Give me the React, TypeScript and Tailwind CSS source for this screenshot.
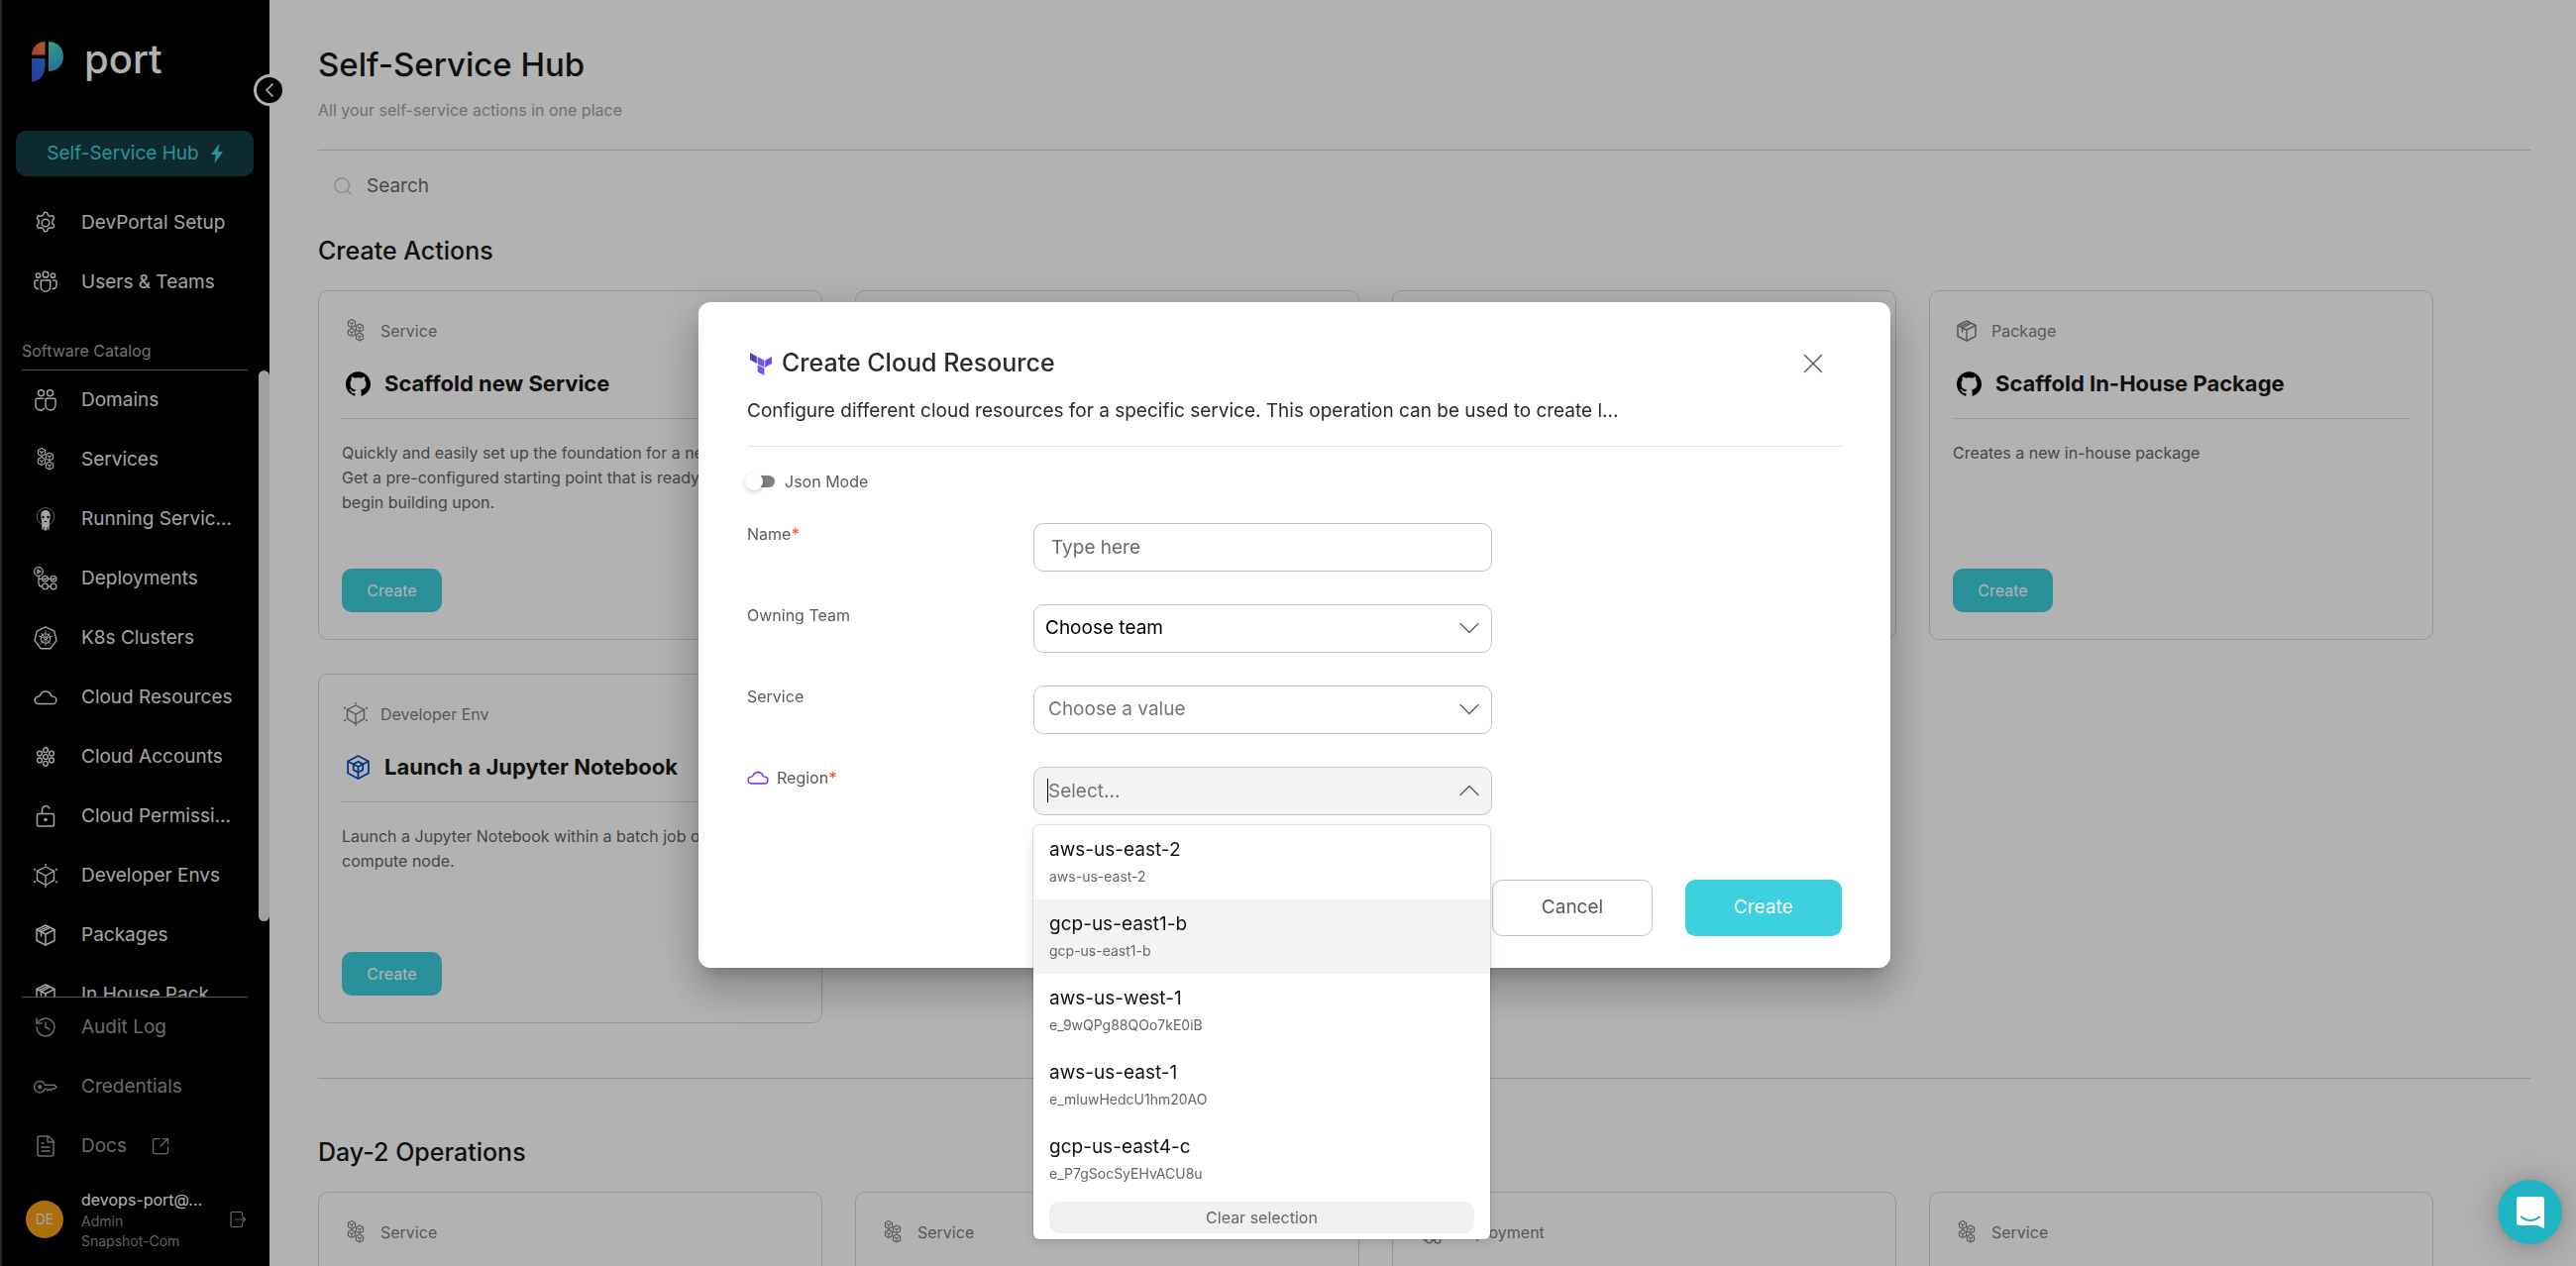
import React, { useState } from "react";
import { ChevronLeft, FileText, History, Search, SquareArrowOutUpRight, X } from "lucide-react";
import { SiGithub } from "react-icons/si";

type IconProps = { className?: string };

const strokeProps = {
  fill: "none",
  stroke: "currentColor",
  strokeLinecap: "round" as const,
  strokeLinejoin: "round" as const,
};

const PortMark = ({ className }: IconProps) => (
  <svg viewBox="0 0 32 41" className={className} aria-hidden="true">
    <defs>
      <linearGradient id="markRed" x1="1" y1="0" x2="0" y2="1">
        <stop offset="0" stopColor="#f58a1f" />
        <stop offset="1" stopColor="#ef5a6a" />
      </linearGradient>
      <linearGradient id="markTeal" x1="0" y1="0" x2="0.3" y2="1">
        <stop offset="0" stopColor="#4fe0c4" />
        <stop offset="1" stopColor="#2fa8dc" />
      </linearGradient>
      <linearGradient id="markBlue" x1="1" y1="0" x2="0" y2="1">
        <stop offset="0" stopColor="#2a7fe0" />
        <stop offset="1" stopColor="#4050e0" />
      </linearGradient>
    </defs>
    <path d="M13.500 0v13.500H0C0 6 6 0 13.500 0Z" fill="url(#markRed)" />
    <path d="M0 17h13.500v6.500C13.500 33 8 40.500 0 40.500Z" fill="url(#markBlue)" />
    <path d="M17 0c9 0 15 6.500 15 15s-6 15-15 15Z" fill="url(#markTeal)" />
  </svg>
);

const BoltIcon = ({ className }: IconProps) => (
  <svg viewBox="0 0 12 20" className={className} fill="currentColor" aria-hidden="true">
    <path d="M8.500 0 0 11h4.600L3.500 20 12 8.200H7.200Z" />
  </svg>
);

const GearIcon = ({ className }: IconProps) => (
  <svg viewBox="0 0 24 24" className={className} {...strokeProps} strokeWidth="1.500" aria-hidden="true">
    <circle cx="12" cy="12" r="3.800" />
    <path d="M9.600 4.200 10.300 2.200a1.500 1.500 0 0 1 1.400-1h.6a1.500 1.500 0 0 1 1.400 1l.7 2 1.900 1.100 2.100-.4a1.500 1.500 0 0 1 1.600.7l.4.700a1.500 1.500 0 0 1-.2 1.700l-1.400 1.700v2.600l1.400 1.700a1.500 1.500 0 0 1 .2 1.700l-.4.700a1.500 1.500 0 0 1-1.600.7l-2.100-.4-1.900 1.100-.7 2a1.500 1.500 0 0 1-1.400 1h-.6a1.500 1.500 0 0 1-1.400-1l-.7-2-1.900-1.100-2.100.4a1.500 1.500 0 0 1-1.600-.7l-.4-.7a1.500 1.500 0 0 1 .2-1.700l1.400-1.700v-2.600L3.800 8a1.500 1.500 0 0 1-.2-1.700l.4-.7a1.500 1.500 0 0 1 1.600-.7l2.100.4Z" />
  </svg>
);

const UsersIcon = ({ className }: IconProps) => (
  <svg viewBox="0 0 24 24" className={className} {...strokeProps} strokeWidth="1.500" aria-hidden="true">
    <circle cx="12" cy="4.200" r="2.900" />
    <circle cx="4.500" cy="5.200" r="2.100" />
    <circle cx="19.500" cy="5.200" r="2.100" />
    <path d="M7.300 10h9.400v6.500a4.700 4.700 0 0 1-9.400 0Z" />
    <path d="M4.500 10H2.200a1.200 1.200 0 0 0-1.200 1.200V15a3.500 3.500 0 0 0 3.800 3.600M19.500 10h2.300a1.200 1.200 0 0 1 1.200 1.200V15a3.500 3.500 0 0 1-3.800 3.600" />
  </svg>
);

const DomainsIcon = ({ className }: IconProps) => (
  <svg viewBox="0 0 24 24" className={className} {...strokeProps} strokeWidth="1.500" aria-hidden="true">
    <circle cx="7.500" cy="4.800" r="3" />
    <circle cx="16.500" cy="4.800" r="3" />
    <path d="M12 11.200a1 1 0 0 1 1-1h8a1 1 0 0 1 1 1V17a5 5 0 0 1-10 0Z" />
    <path d="M9.800 10.200H3.300a1.300 1.300 0 0 0-1.300 1.300V17a5 5 0 0 0 8.800 3.300" />
  </svg>
);

const hexagons = [
  [8, 4.5],
  [16, 9],
  [8, 13.5],
  [16, 18],
];

const ServicesIcon = ({ className }: IconProps) => (
  <svg viewBox="0 0 24 24" className={className} {...strokeProps} strokeWidth="1.100" aria-hidden="true">
    {hexagons.map(([x, y]) => (
      <g key={`${x}-${y}`} transform={`translate(${x} ${y})`}>
        <path d="M0-4 3.600-2v4L0 4-3.600 2v-4Z" />
        <path d="M-2-.9 0 .2 2-.9M0 .2v2.200" />
      </g>
    ))}
  </svg>
);

const ArgoIcon = ({ className }: IconProps) => (
  <svg viewBox="0 0 24 24" className={className} aria-hidden="true">
    <circle cx="12" cy="9.500" r="8.900" fill="none" stroke="currentColor" strokeWidth="1" opacity="0.6" />
    <path
      d="M12 3c2.900 0 4.800 2.300 4.800 5.600 0 2.500-.9 4.200-1 6v7.900h-1.500V20h-.8v3.500h-3V20h-.8v2.500H8.200v-7.900c-.1-1.800-1-3.500-1-6C7.200 5.300 9.100 3 12 3Z"
      fill="currentColor"
    />
    <circle cx="9.500" cy="10" r="1.200" fill="#000" />
    <circle cx="14.500" cy="10" r="1.200" fill="#000" />
    <path d="M10.800 14h2.400a1.200 1.200 0 0 1-2.400 0Z" fill="#000" />
  </svg>
);

const DeploymentsIcon = ({ className }: IconProps) => (
  <svg viewBox="0 0 24 24" className={className} {...strokeProps} strokeWidth="1.300" aria-hidden="true">
    <circle cx="5" cy="5" r="4.300" />
    <path d="M3.900 3.200v3.600L7 5Z" />
    <path d="M5 9.300V17a3 3 0 0 0 3 3M5 12.300h3.500" />
    <circle cx="11.500" cy="12.300" r="2.900" />
    <circle cx="20" cy="12.300" r="2.900" />
    <circle cx="11.500" cy="20" r="2.900" />
    <circle cx="20" cy="20" r="2.900" />
    <path d="m10.300 12.300 1 1 1.600-1.600M18.800 12.300l1 1 1.600-1.600M14.400 12.300h2.700M14.400 20h2.700" />
  </svg>
);

const KubernetesIcon = ({ className }: IconProps) => (
  <svg viewBox="0 0 24 24" className={className} {...strokeProps} strokeWidth="1.400" aria-hidden="true">
    <path d="M12 .9 20.800 5.100 23 14.700 16.900 22.700H7.100L1 14.700 3.200 5.100Z" />
    <circle cx="12" cy="12.500" r="4.800" strokeWidth="1.100" />
    <circle cx="12" cy="12.500" r="1.300" strokeWidth="1" />
    <path
      d="M12 5v6M12 19.500V14M5 10l5.700 2M19 10l-5.700 2M7 18l4-4.500M17 18l-4-4.500M7.500 7l3.500 4.500M16.500 7 13 11.500"
      strokeWidth="0.900"
    />
  </svg>
);

const CloudIcon = ({ className }: IconProps) => (
  <svg viewBox="0 0 24 24" className={className} {...strokeProps} strokeWidth="1.500" aria-hidden="true">
    <path d="M5 18.500a3.700 3.700 0 0 1-.3-7.400c.9-.1 1.600-.5 2-1.500a5.700 5.700 0 0 1 10.600 0c.4 1 1.100 1.400 2 1.500a3.700 3.700 0 0 1-.3 7.400Z" />
  </svg>
);

const AccountsIcon = ({ className }: IconProps) => (
  <svg viewBox="0 0 24 24" className={className} {...strokeProps} strokeWidth="1.400" aria-hidden="true">
    <circle cx="12" cy="12" r="2.400" />
    <circle cx="12" cy="5.200" r="2.400" />
    <circle cx="12" cy="18.800" r="2.400" />
    <circle cx="6" cy="8.600" r="2.400" />
    <circle cx="18" cy="8.600" r="2.400" />
    <circle cx="6" cy="15.400" r="2.400" />
    <circle cx="18" cy="15.400" r="2.400" />
  </svg>
);

const UnlockIcon = ({ className }: IconProps) => (
  <svg viewBox="0 0 24 24" className={className} {...strokeProps} strokeWidth="1.500" aria-hidden="true">
    <rect x="3.500" y="9.500" width="17" height="12.500" rx="1.500" />
    <path d="M8.500 9.500V5.300a3.800 3.800 0 0 1 7.300-1.400" />
    <circle cx="12" cy="15.500" r="1" fill="currentColor" />
  </svg>
);

const EnvIcon = ({ className }: IconProps) => (
  <svg viewBox="0 0 24 24" className={className} {...strokeProps} strokeWidth="1.400" aria-hidden="true">
    <path d="M12 3 20.500 7.300v9.400L12 21.500 3.500 16.700V7.300Z" />
    <path d="m3.500 7.300 8.500 4.700 8.500-4.700M12 12v9.500" />
    <path d="M12 0v1.200M12 22.800V24M.5 5.500l1 .5M23.500 5.500l-1 .5M.5 18.500l1-.5M23.500 18.500l-1-.5" />
  </svg>
);

const PackageIcon = ({ className }: IconProps) => (
  <svg viewBox="0 0 24 24" className={className} {...strokeProps} strokeWidth="1.500" aria-hidden="true">
    <path d="M12 2 21 6.500v11L12 22l-9-4.500v-11Z" />
    <path d="m3 6.500 9 4.500 9-4.500M12 11v11M7.500 13V8.800l9-4.500M7.500 8.800 5.500 7.700l9-4.400" />
  </svg>
);

const KeyIcon = ({ className }: IconProps) => (
  <svg viewBox="0 0 26 24" className={className} {...strokeProps} strokeWidth="1.600" aria-hidden="true">
    <path d="M12.300 10A6.100 6.100 0 1 0 12.300 14.500H14l1.500 1.500 1.500-1.500 1.500 1.500 1.500-1.500h2.500l2.500-2.300L22.500 10Z" />
    <circle cx="6.800" cy="12.200" r="1.500" fill="currentColor" />
  </svg>
);

const LogoutIcon = ({ className }: IconProps) => (
  <svg viewBox="0 0 16 16" className={className} {...strokeProps} strokeWidth="1.200" aria-hidden="true">
    <path d="M12.500 4V2a1.500 1.500 0 0 0-1.500-1.500H2.500A1.500 1.500 0 0 0 1 2v12a1.500 1.500 0 0 0 1.500 1.500H11a1.500 1.500 0 0 0 1.500-1.500v-2" />
    <path d="M5.500 8h10M13 5.500 15.500 8 13 10.500" />
  </svg>
);

const NotebookIcon = ({ className }: IconProps) => (
  <svg viewBox="0 0 24 24" className={className} {...strokeProps} strokeWidth="1.700" aria-hidden="true">
    <path d="M12 1 22 6.300v11.400L12 23 2 17.700V6.300Z" />
    <path d="m2 6.300 10 5.200 10-5.200M12 11.500V23" />
    <path d="M12 6.500 16.500 9v5.500L12 17l-4.500-2.500V9Z" />
  </svg>
);

const TerraformIcon = ({ className }: IconProps) => (
  <svg viewBox="0 0 24 24" className={className} aria-hidden="true">
    <path d="M1 1v7.200l6.800 3.700V4.700Z" fill="#4a48b8" />
    <path d="M8.600 5.100v7.200l6.800 3.700V8.800Z" fill="#7b52ee" />
    <path d="M16.200 8.800V16l6.800-3.900V4.900Z" fill="#6f50ea" />
    <path d="M8.600 13.200v7.100l6.800 3.700v-7.200Z" fill="#7b52ee" />
  </svg>
);

const Chevron = ({ className }: IconProps) => (
  <svg viewBox="0 0 20 12" className={className} {...strokeProps} strokeWidth="1.200" aria-hidden="true">
    <path d="m1 1.500 9 9 9-9" />
  </svg>
);

const catalog = [
  { label: "Domains", icon: DomainsIcon },
  { label: "Services", icon: ServicesIcon },
  { label: "Running Servic...", icon: ArgoIcon },
  { label: "Deployments", icon: DeploymentsIcon },
  { label: "K8s Clusters", icon: KubernetesIcon },
  { label: "Cloud Resources", icon: CloudIcon },
  { label: "Cloud Accounts", icon: AccountsIcon },
  { label: "Cloud Permissi...", icon: UnlockIcon },
  { label: "Developer Envs", icon: EnvIcon },
  { label: "Packages", icon: PackageIcon },
  { label: "In House Pack...", icon: PackageIcon },
];

const NavItem = ({ label, icon: Icon, children }: { label: string; icon: React.ElementType; children?: React.ReactNode }) => (
  <a href="#" className="flex h-[60px] shrink-0 items-center pl-8 text-[19px] whitespace-nowrap">
    <Icon className="mr-6 size-6 shrink-0" strokeWidth={1.5} />
    {label}
    {children}
  </a>
);

const Sidebar = () => (
  <aside className="relative flex w-[272px] shrink-0 flex-col border-l-2 border-[#3a3a3a] bg-black text-[#ebebeb]">
    <div className="flex h-[132px] items-start pt-10 pl-[30px]">
      <PortMark className="mt-[2px] h-[41px] w-8" />
      <span className="ml-[21px] text-[40px] leading-[40px] font-medium text-white">port</span>
    </div>
    <button
      type="button"
      aria-label="Collapse menu"
      className="absolute top-[75px] -right-4 flex size-8 items-center justify-center rounded-full border-[3px] border-white bg-black text-white"
    >
      <ChevronLeft className="size-6" strokeWidth={1.75} />
    </button>
    <a
      href="#"
      className="mr-4 mb-[17px] ml-[14px] flex h-[46px] shrink-0 items-center justify-center gap-3 rounded-[10px] bg-[#133d42] text-[19px] text-[#3cd0dd]"
    >
      Self-Service Hub
      <BoltIcon className="h-5 w-3" />
    </a>
    <nav className="flex min-h-0 flex-1 flex-col">
      <NavItem label="DevPortal Setup" icon={GearIcon} />
      <NavItem label="Users & Teams" icon={UsersIcon} />
      <h2 className="mr-[22px] ml-5 flex h-[59px] shrink-0 items-end border-b border-[#777] pb-[7px] text-base leading-6 text-[#a4a4a4]">
        Software Catalog
      </h2>
      <div className="relative min-h-0 flex-1 overflow-hidden">
        {catalog.map((item) => (
          <NavItem key={item.label} {...item} />
        ))}
        <div className="absolute top-0 right-0 h-[88%] w-[11px] rounded-full bg-[#e6e6e6]" />
      </div>
      <div className="mr-[22px] ml-5 border-b border-[#777]" />
      <div className="text-[#9a9a9a]">
        <NavItem label="Audit Log" icon={History} />
        <NavItem label="Credentials" icon={KeyIcon} />
        <NavItem label="Docs" icon={FileText}>
          <SquareArrowOutUpRight className="ml-6 size-5" strokeWidth={1.5} />
        </NavItem>
      </div>
    </nav>
    <div className="flex h-[91px] shrink-0 items-center px-6 pb-1">
      <span className="flex size-[38px] items-center justify-center rounded-full bg-[#f6a016] text-sm text-[#e8e8e8]">DE</span>
      <div className="ml-[18px] flex-1 text-[14px] leading-5 text-[#8f8f8f]">
        <p className="text-base leading-6 text-white">devops-port@...</p>
        <p>Admin</p>
        <p>Snapshot-Com</p>
      </div>
      <button type="button" aria-label="Log out" className="text-[#9a9a9a]">
        <LogoutIcon className="size-4" />
      </button>
    </div>
  </aside>
);

type Action = {
  kind?: string;
  kindIcon?: React.ElementType;
  title?: string;
  icon?: React.ElementType;
  iconClass?: string;
  text?: string;
};

const createActions: Action[] = [
  {
    kind: "Service",
    kindIcon: ServicesIcon,
    title: "Scaffold new Service",
    icon: SiGithub,
    text: "Quickly and easily set up the foundation for a new service. Get a pre-configured starting point that is ready for you to begin building upon.",
  },
  {},
  {},
  {
    kind: "Package",
    kindIcon: PackageIcon,
    title: "Scaffold In-House Package",
    icon: SiGithub,
    text: "Creates a new in-house package",
  },
  {
    kind: "Developer Env",
    kindIcon: EnvIcon,
    title: "Launch a Jupyter Notebook",
    icon: NotebookIcon,
    iconClass: "text-[#0b4bbd]",
    text: "Launch a Jupyter Notebook within a batch job on a new compute node.",
  },
];

const dayTwoActions: Action[] = [
  { kind: "Service", kindIcon: ServicesIcon },
  { kind: "Service", kindIcon: ServicesIcon },
  { kind: "Deployment", kindIcon: DeploymentsIcon },
  { kind: "Service", kindIcon: ServicesIcon },
];

const ActionCard = ({ kind, kindIcon: KindIcon, title, icon: Icon, iconClass = "text-black", text }: Action) => (
  <article className="flex h-[353px] w-[509px] flex-col rounded-[10px] border border-[#d6d6dc] px-[23px] pt-[26px] pb-[27px]">
    <div className="flex h-7 items-center gap-[11px] text-base text-[#7f7f7f]">
      {KindIcon && <KindIcon className="mx-[2px] size-6" />}
      {kind}
    </div>
    {title && Icon && (
      <>
        <h3 className="mt-6 flex h-[30px] items-center gap-[11px] text-[22px] font-bold text-[#181818]">
          <span className="flex w-8 justify-center">
            <Icon className={`size-[25px] ${iconClass}`} />
          </span>
          {title}
        </h3>
        <p className="mt-5 border-t border-[#d6d6dc] pt-[22px] text-base leading-[25px] text-[#666]">{text}</p>
        <button type="button" className="mt-auto h-11 w-[101px] rounded-[10px] bg-[#3dd0de] text-base text-white">
          Create
        </button>
      </>
    )}
  </article>
);

const Hub = () => (
  <main className="min-w-0 flex-1 overflow-hidden bg-white pr-[46px] pl-[49px]">
    <header className="border-b border-[#d2d2d8] pt-11 pb-7">
      <h1 className="text-[33px] leading-[42px] font-medium text-[#181818]">Self-Service Hub</h1>
      <p className="mt-[13px] text-base leading-6 text-[#a3a3a3]">All your self-service actions in one place</p>
    </header>
    <label className="mt-[17px] flex h-[38px] items-center gap-[13px] pl-[14px]">
      <Search className="size-[22px] text-[#c8c8c8]" strokeWidth={1.5} />
      <input
        type="text"
        aria-label="Search"
        placeholder="Search"
        className="w-80 text-[19px] outline-none placeholder:text-[#6c6c6c]"
      />
    </label>
    <section className="mt-[30px] border-b border-[#d2d2d8] pb-[55px]">
      <h2 className="text-[25px] leading-8 font-medium text-[#181818]">Create Actions</h2>
      <div className="mt-6 flex flex-wrap gap-x-[33px] gap-y-[34px]">
        {createActions.map((action, i) => (
          <ActionCard key={i} {...action} />
        ))}
      </div>
    </section>
    <section className="mt-[58px]">
      <h2 className="text-[25px] leading-8 font-medium text-[#181818]">Day-2 Operations</h2>
      <div className="mt-6 flex flex-wrap gap-x-[33px] gap-y-[34px]">
        {dayTwoActions.map((action, i) => (
          <ActionCard key={i} {...action} />
        ))}
      </div>
    </section>
  </main>
);

const regions = [
  { title: "aws-us-east-2", id: "aws-us-east-2" },
  { title: "gcp-us-east1-b", id: "gcp-us-east1-b" },
  { title: "aws-us-west-1", id: "e_9wQPg88QOo7kE0iB" },
  { title: "aws-us-east-1", id: "e_mluwHedcU1hm20AO" },
  { title: "gcp-us-east4-c", id: "e_P7gSocSyEHvACU8u" },
];

const Field = ({
  label,
  htmlFor,
  required,
  icon,
  children,
}: {
  label: string;
  htmlFor: string;
  required?: boolean;
  icon?: React.ReactNode;
  children: React.ReactNode;
}) => (
  <div className="flex items-start">
    <label htmlFor={htmlFor} className="flex w-[289px] shrink-0 items-center text-base leading-[22px] text-[#5a5a5a]">
      {icon}
      {label}
      {required && <span className="font-semibold text-[#ff5c35]">*</span>}
    </label>
    <div className="relative w-[463px]">{children}</div>
  </div>
);

const RegionSelect = () => {
  const [value, setValue] = useState("");
  const [active, setActive] = useState(1);

  return (
    <>
      <input
        id="region"
        type="text"
        role="combobox"
        aria-expanded="true"
        aria-controls="region-list"
        placeholder="Select..."
        value={value}
        onChange={(e) => setValue(e.target.value)}
        className="h-[49px] w-full rounded-[10px] border border-[#c4c4c4] bg-[#f3f3f3] px-[14px] text-[19px] outline-none placeholder:text-[#757575]"
      />
      <span className="absolute top-3 left-[14px] h-6 w-px bg-black" />
      <Chevron className="absolute top-[18px] right-[13px] h-3 w-5 rotate-180 text-[#555]" />
      <div className="absolute top-[59px] right-[2px] left-0 z-10 overflow-hidden rounded-md bg-white pb-[6px] shadow-[0_0_0_1px_rgba(0,0,0,0.1),0_4px_11px_rgba(0,0,0,0.12)]">
        <ul id="region-list" role="listbox">
          {regions.map((region, i) => (
            <li
              key={region.id}
              role="option"
              aria-selected={i === active}
              onMouseEnter={() => setActive(i)}
              onClick={() => setValue(region.title)}
              className={i === active ? "h-[75px] bg-[#f3f3f3] px-4 pt-3" : "h-[75px] px-4 pt-3"}
            >
              <p className="text-[19px] leading-[26px] text-[#111]">{region.title}</p>
              <p className="mt-1 text-[14px] leading-5 text-[#666]">{region.id}</p>
            </li>
          ))}
        </ul>
        <div className="px-4 pt-[5px]">
          <button
            type="button"
            onClick={() => setValue("")}
            className="h-8 w-full rounded-[10px] bg-[#eff0f2] text-base text-[#666]"
          >
            Clear selection
          </button>
        </div>
      </div>
    </>
  );
};

const selectClass =
  "h-[49px] w-full appearance-none rounded-[10px] border border-[#c4c4c4] bg-white text-[19px] outline-none";

const CreateDialog = () => (
  <div className="fixed inset-0 flex items-center justify-center bg-black/30 pt-1 pl-[13px]">
    <div
      role="dialog"
      aria-labelledby="dialog-title"
      className="w-full max-w-[1203px] rounded-xl bg-white px-[49px] pt-11 pb-8 shadow-[0_11px_15px_-7px_rgba(0,0,0,0.2),0_24px_38px_3px_rgba(0,0,0,0.14),0_9px_46px_8px_rgba(0,0,0,0.12)]"
    >
      <div className="flex h-9 items-center pr-3 pl-[2px]">
        <TerraformIcon className="size-6" />
        <h2 id="dialog-title" className="ml-[9px] flex-1 text-[25px] font-medium text-[#2c2c2c]">
          Create Cloud Resource
        </h2>
        <button type="button" aria-label="Close" className="text-[#5f5f5f]">
          <X className="size-[34px]" strokeWidth={1.1} />
        </button>
      </div>
      <p className="mt-4 border-b border-[#dfe0ea] pb-[21px] text-[19px] leading-7 text-[#2a2a2a]">
        Configure different cloud resources for a specific service. This operation can be used to create l...
      </p>
      <form className="mt-[23px]" onSubmit={(e) => e.preventDefault()}>
        <label className="flex items-center gap-[10px] text-base leading-6 text-[#5a5a5a]">
          <span className="relative flex h-3 w-7 items-center rounded-full bg-[#808080]">
            <input
              type="checkbox"
              role="switch"
              className="absolute -left-[2px] size-[18px] appearance-none rounded-full bg-white shadow-[0_2px_5px_rgba(0,0,0,0.2)]"
            />
          </span>
          Json Mode
        </label>
        <div className="mt-[30px] flex flex-col gap-[33px]">
          <Field label="Name" htmlFor="name" required>
            <input
              id="name"
              type="text"
              placeholder="Type here"
              className="h-[49px] w-full rounded-[10px] border border-[#c4c4c4] bg-white px-[17px] text-[19px] outline-none placeholder:text-[#6c6c6c]"
            />
          </Field>
          <Field label="Owning Team" htmlFor="team">
            <select id="team" className={`${selectClass} pl-[11px] text-black`}>
              <option>Choose team</option>
            </select>
            <Chevron className="pointer-events-none absolute top-[18px] right-[13px] h-3 w-5 text-[#555]" />
          </Field>
          <Field label="Service" htmlFor="service">
            <select id="service" className={`${selectClass} pl-[14px] text-[#757575]`}>
              <option>Choose a value</option>
            </select>
            <Chevron className="pointer-events-none absolute top-[18px] right-[13px] h-3 w-5 text-[#555]" />
          </Field>
          <Field
            label="Region"
            htmlFor="region"
            required
            icon={<CloudIcon className="mr-2 size-[22px] text-[#7a22f5]" />}
          >
            <RegionSelect />
          </Field>
        </div>
        <div className="mt-[65px] flex justify-end gap-[33px]">
          <button type="button" className="h-[57px] w-[162px] rounded-[10px] border border-[#c4c4c4] text-[19px] text-[#5a5a5a]">
            Cancel
          </button>
          <button type="submit" className="h-[57px] w-[158px] rounded-[10px] bg-[#3dd0de] text-[19px] text-white">
            Create
          </button>
        </div>
      </form>
    </div>
  </div>
);

const ChatButton = () => (
  <button
    type="button"
    aria-label="Open chat"
    className="fixed right-[14px] bottom-[22px] flex size-[65px] items-center justify-center rounded-full bg-[#20b3c2] shadow-[0_1px_8px_rgba(0,0,0,0.1),0_3px_36px_rgba(0,0,0,0.25)]"
  >
    <svg viewBox="0 0 28 32" className="h-8 w-7" aria-hidden="true">
      <path d="M3 0h22a3 3 0 0 1 3 3v29l-7-3H3a3 3 0 0 1-3-3V3a3 3 0 0 1 3-3Z" fill="#fff" />
      <path d="M5 20.500c5 4.500 13 4.500 18 0" fill="none" stroke="#20b3c2" strokeWidth="2" strokeLinecap="round" />
    </svg>
  </button>
);

const App = () => {
  return (
    <div className="flex h-screen overflow-hidden bg-white font-['Inter','Liberation_Sans',sans-serif]">
      <Sidebar />
      <Hub />
      <CreateDialog />
      <ChatButton />
    </div>
  );
};

export default App;
